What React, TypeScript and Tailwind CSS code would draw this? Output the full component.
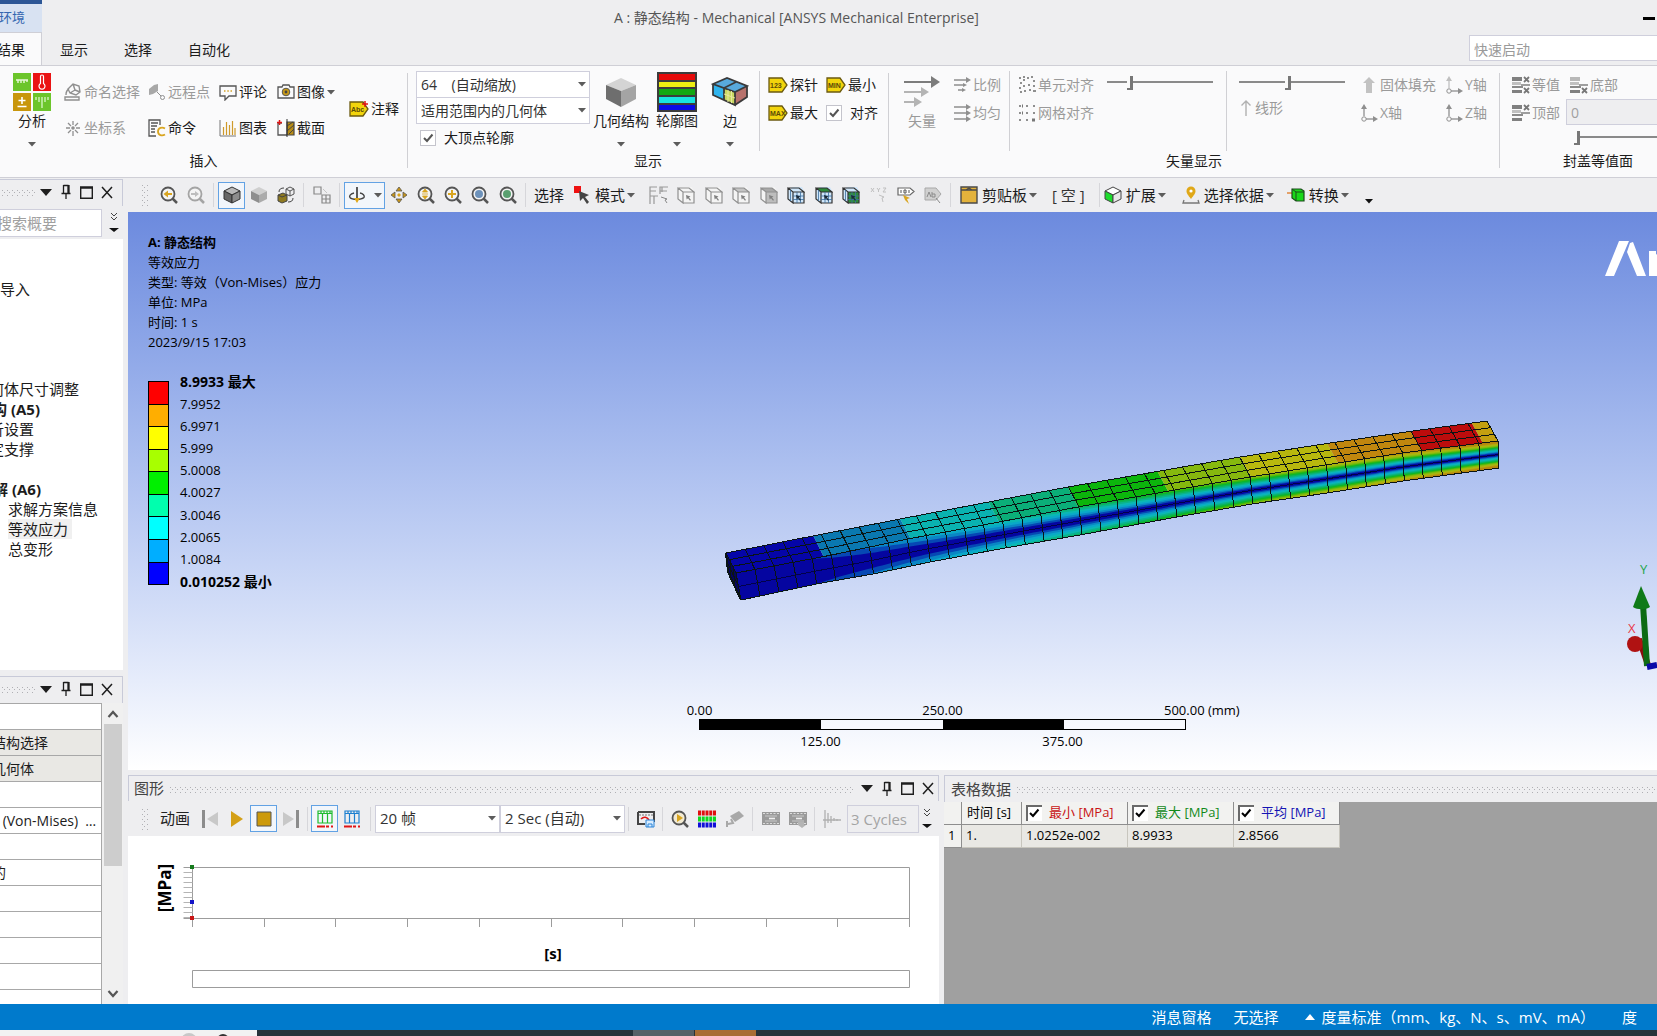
import type { ReactNode } from "react";
import clsx from "clsx";

/* ---------- shared pieces ---------- */

function Svg({ w = 18, h = 18, children }: { w?: number; h?: number; children: ReactNode }) {
  return (
    <svg width={w} height={h} viewBox={`0 0 ${w} ${h}`} fill="none" className="shrink-0" aria-hidden="true">
      {children}
    </svg>
  );
}

function Caret({ color = "#5c5c5c" }: { color?: string }) {
  return (
    <Svg w={8} h={5}>
      <path d="M0 0h8L4 4.5z" fill={color} />
    </Svg>
  );
}

const DOTS =
  "h-2 flex-1 bg-[radial-gradient(circle,#b0b0b4_0.8px,transparent_1px),radial-gradient(circle,#b0b0b4_0.8px,transparent_1px)] bg-[size:5px_5px] bg-[position:0_0,2px_2px]";

function Grip() {
  return (
    <span className="h-6 w-2 shrink-0 bg-[radial-gradient(circle,#b0b0b4_0.8px,transparent_1px),radial-gradient(circle,#b0b0b4_0.8px,transparent_1px)] bg-[size:5px_5px] bg-[position:0_0,2px_2px]" />
  );
}

function WindowButtons() {
  return (
    <div className="flex shrink-0 items-center">
      <button type="button" aria-label="菜单" className="flex w-5 justify-center">
        <Svg w={12} h={7}>
          <path d="M0 0h12L6 7z" fill="#1e1e1e" />
        </Svg>
      </button>
      <button type="button" aria-label="固定" className="flex w-5 justify-center">
        <Svg w={10} h={16}>
          <path d="M2.5 1v8M2.5 1.5h5M7 1v8M8 1v8M.5 9.5h9M5 10v5" stroke="#1e1e1e" strokeWidth="1.3" />
        </Svg>
      </button>
      <button type="button" aria-label="最大化" className="flex w-[21px] justify-center">
        <Svg w={13} h={13}>
          <path d="M.7 1h11.6v11.3H.7zM.7 2h11.6" stroke="#1e1e1e" strokeWidth="1.4" />
        </Svg>
      </button>
      <button type="button" aria-label="关闭" className="flex w-5 justify-center">
        <Svg w={12} h={13}>
          <path d="M1 1l10 11M11 1L1 12" stroke="#1e1e1e" strokeWidth="1.5" />
        </Svg>
      </button>
    </div>
  );
}

function RibbonButton({ icon, label, disabled, menu }: { icon: ReactNode; label: string; disabled?: boolean; menu?: boolean }) {
  return (
    <button
      type="button"
      disabled={disabled}
      className={clsx("flex items-center gap-[2px] text-sm", disabled ? "text-[#9a9a9a]" : "text-[#1c1c1c]")}
    >
      {icon}
      {label}
      {menu && <Caret />}
    </button>
  );
}

function BigButton({ icon, label, width, disabled }: { icon: ReactNode; label: string; width: string; disabled?: boolean }) {
  return (
    <button
      type="button"
      disabled={disabled}
      className={clsx("flex shrink-0 flex-col items-center text-sm", width, disabled ? "text-[#9a9a9a]" : "text-[#1c1c1c]")}
    >
      <span className="flex h-[41px] items-center">{icon}</span>
      <span className="mb-3 leading-[18px]">{label}</span>
      {!disabled && <Caret />}
    </button>
  );
}

function Check({ label, sharp, className }: { label: string; sharp?: boolean; className?: string }) {
  return (
    <label className={clsx("flex items-center", className)}>
      <span className="relative flex">
        <input
          type="checkbox"
          defaultChecked
          className={clsx(
            "size-4 appearance-none bg-white",
            sharp ? "border-t-2 border-l-2 border-[#6a6a6a]" : "border border-[#c4c4cc]",
          )}
        />
        <svg viewBox="0 0 16 16" fill="none" className="pointer-events-none absolute inset-0 size-4" aria-hidden="true">
          <path d="M4 8l3 3 5.500-6.500" stroke={sharp ? "#000" : "#555"} strokeWidth="2" />
        </svg>
      </span>
      {label}
    </label>
  );
}

function Select({ label, value, className, size = "text-sm" }: { label: string; value: string; className: string; size?: string }) {
  return (
    <span className={clsx("relative flex shrink-0", className)}>
      <select
        aria-label={label}
        className={clsx("w-full appearance-none border border-[#cfcfdc] bg-white pl-1 text-[#333]", size)}
      >
        <option>{value}</option>
      </select>
      <span className="pointer-events-none absolute inset-y-0 right-1 flex items-center">
        <Caret />
      </span>
    </span>
  );
}

function Slider({ label, value, width }: { label: string; value: number; width: string }) {
  return (
    <input
      type="range"
      aria-label={label}
      defaultValue={value}
      className={clsx(
        "h-[14px] shrink-0 appearance-none bg-[linear-gradient(#8a8a8a,#8a8a8a)] bg-[size:100%_2px] bg-[position:0_5px] bg-no-repeat [&::-webkit-slider-thumb]:h-[14px] [&::-webkit-slider-thumb]:w-[6px] [&::-webkit-slider-thumb]:appearance-none [&::-webkit-slider-thumb]:border-r-[3px] [&::-webkit-slider-thumb]:border-b-[2px] [&::-webkit-slider-thumb]:border-[#777] [&::-webkit-slider-thumb]:bg-[#fafafa]",
        width,
      )}
    />
  );
}

const Divider = () => <span className="mt-[5px] h-20 w-px shrink-0 bg-[#d0d0d4]" />;
const TallDivider = () => <span className="mt-[7px] h-[95px] w-px shrink-0 bg-[#d0d0d4]" />;

/* ---------- ribbon icons ---------- */

const G = "#8f8f8f";

const analysisIcon = (
  <Svg w={38} h={38}>
    <path d="M0 0h18v18H0zM20 20h18v18H20z" fill="#6cc52b" />
    <path d="M20 0h18v18H20z" fill="#ea1414" />
    <path d="M0 20h18v18H0z" fill="#c8960c" />
    <path d="M3 7h12M5 7v3M8 7v3M11 7v3M14 7v2" stroke="#e8f8da" strokeWidth="1.4" />
    <path d="M27.500 3.500a1.500 1.500 0 013 0v7a3 3 0 11-3 0z" stroke="#fff" strokeWidth="1.200" />
    <path d="M9 24v7M5.500 27.500h7M4.500 33.500h9" stroke="#fff" strokeWidth="1.600" />
    <path d="M29 24v11M26 24v5M32 24v5M23 24v3M35 24v3" stroke="#d9f7c8" strokeWidth="1.300" />
  </Svg>
);

const namedSelIcon = (
  <Svg>
    <path d="M4 6l5-5 6 2 1 6-4 3-6-2zM9 1l2 6-5 3M11 7l5 2M1 14h14v3H1zM2 12c0-4 1-5 3-6" stroke={G} strokeWidth="1.4" />
  </Svg>
);
const remoteIcon = (
  <Svg>
    <path d="M1 6l5-4 4-1v7l-5 3-4 1z" fill="#a8a8a8" />
    <path d="M9 9l4 4" stroke={G} />
    <circle cx="14.500" cy="14.500" r="2" stroke={G} />
  </Svg>
);
const commentIcon = (
  <Svg>
    <path d="M1 3h16v10h-7l-4 4v-4H1z" stroke="#555" strokeWidth="1.300" />
    <path d="M5 8h1.500M8.300 8h1.500M11.500 8H13" stroke="#d4a32a" strokeWidth="1.500" />
  </Svg>
);
const imageIcon = (
  <Svg>
    <path d="M1 4h4l1-2h6l1 2h4v11H1z" stroke="#555" strokeWidth="1.300" />
    <circle cx="9" cy="9" r="3.800" fill="#c99a16" stroke="#555" />
    <circle cx="9" cy="9" r="1.400" fill="#444" />
  </Svg>
);
const coordIcon = (
  <Svg>
    <path d="M9 2v4M9 12v5M2 9h4M12 9h4M4 4l3 3M14 4l-3 3M4 14l3-3M14 14l-3-3" stroke={G} strokeWidth="1.300" />
    <circle cx="9" cy="9" r="1.800" fill={G} />
  </Svg>
);
const commandIcon = (
  <Svg>
    <path d="M12 6V1H1v16h7M3 4h7M3 7h6M3 10h4M3 13h4" stroke="#555" strokeWidth="1.300" />
    <path d="M17 9.500c-3-2-7-.5-7 3s4 5 7 3" stroke="#d9a520" strokeWidth="1.800" />
  </Svg>
);
const chartIcon = (
  <Svg>
    <path d="M1 1v16h16" stroke="#777" />
    <path d="M4.500 8v8M7.500 3v13M10.500 6v10M13.500 2v14M16 9v7" stroke="#cf9a2a" strokeWidth="1.200" />
  </Svg>
);
const sectionIcon = (
  <Svg>
    <path d="M5 4H1v12h9" stroke="#555" strokeWidth="1.300" />
    <path d="M10 3h7v13h-7z" fill="#b98c14" stroke="#444" strokeWidth="1.200" />
    <path d="M10 7l6-4M10 12l7-6M12 15l5-5" stroke="#444" />
    <path d="M10 0v18" stroke="#333" />
    <path d="M0 3.500h5M2.500 1v5" stroke="#e01515" strokeWidth="1.500" />
  </Svg>
);

function TagIcon({ text, plus }: { text: string; plus?: boolean }) {
  return (
    <Svg w={20} h={16}>
      <path d="M1 1h13l5 7-5 7H1z" fill="#f2d40c" stroke="#6b5a10" strokeWidth="1.300" />
      <text x="2" y="11" fontSize="7" fontWeight="700" fill="#5a4a08" fontFamily="Liberation Sans, sans-serif">
        {text}
      </text>
      {plus && <path d="M16 0v6M13 3h6" stroke="#e01515" strokeWidth="1.500" />}
    </Svg>
  );
}

const bigCube = (
  <Svg w={32} h={32}>
    <path d="M16 2l15 7-15 6L1 9z" fill="#d4d4d4" />
    <path d="M1 9l15 6v16L1 23z" fill="#6e6e6e" />
    <path d="M31 9l-15 6v16l15-8z" fill="#a4a4a4" />
  </Svg>
);
const contourIcon = (
  <Svg w={40} h={40}>
    <path d="M0 0h40v40H0z" fill="#3c3c3c" />
    <path d="M2 2h36v6H2z" fill="#e60a0a" />
    <path d="M2 10h36v5H2z" fill="#eeee12" />
    <path d="M2 17h36v6H2z" fill="#12a812" />
    <path d="M2 25h36v6H2z" fill="#18e4e0" />
    <path d="M2 33h36v5H2z" fill="#0a0ae6" />
  </Svg>
);
const edgesIcon = (
  <Svg w={38} h={32}>
    <path d="M2 8l14-6 20 8-12 6z" fill="#58a9dc" />
    <path d="M2 8l11 4v12L2 19z" fill="#2fb4ee" />
    <path d="M13 12l11 4v13l-11-5z" fill="#c8d860" />
    <path d="M24 16l12-6v11l-12 8z" fill="#b8726c" />
    <path d="M2 8l14-6 20 8-12 6zM2 8v11l22 10V16M24 29l12-8V10M13 12v12M13 12l12-6" stroke="#3a3a3a" strokeWidth="1.800" />
    <path d="M17 14v12M20.500 15v12M13 18l11 4" stroke="#e8e8a0" />
  </Svg>
);
const vectorIcon = (
  <Svg w={36} h={34}>
    <path d="M0 7h28" stroke="#7c7c7c" strokeWidth="2" />
    <path d="M27 1l9 6-9 6z" fill="#7c7c7c" />
    <path d="M0 17h18M0 27h12" stroke="#b4b4b4" strokeWidth="2" />
    <path d="M17 12l8 5-8 5zM10 22l8 5-8 5z" fill="#b4b4b4" />
  </Svg>
);
const scaleIcon = (
  <Svg>
    <path d="M1 4h13M1 9h9M5 14h5" stroke={G} strokeWidth="1.400" />
    <path d="M13 1l5 3-5 3zM10 7l4 2-4 2zM9 12l4 2-4 2z" fill={G} />
  </Svg>
);
const uniformIcon = (
  <Svg>
    <path d="M1 3h14M1 9h14M1 15h14" stroke={G} strokeWidth="1.400" />
    <path d="M13 0l5 3-5 3zM13 6l5 3-5 3zM13 12l5 3-5 3z" fill={G} />
  </Svg>
);
const elementAlign = (
  <Svg>
    <path
      d="M1 2h2M5 4h2M2 7h2M9 2h2M13 1h2M15 5h2M1 12h2M5 10h2M6 15h2M10 9h2M15 10h2M11 14h2M15 15h3M2 16h2M5 1h2"
      stroke={G}
      strokeWidth="2"
    />
  </Svg>
);
const gridAlign = (
  <Svg>
    <path d="M1 2h2M8 2h2M15 2h2M1 9h2M8 9h2M15 9h2M1 16h2M8 16h2" stroke={G} strokeWidth="2" />
    <path d="M14 16h3M4 2h1M4 9h1" stroke="#777" strokeWidth="3" />
  </Svg>
);
const lineUp = (
  <Svg w={14}>
    <path d="M7 17V2M2.500 6.500L7 2l4.500 4.500" stroke="#b0b0b0" strokeWidth="1.400" />
  </Svg>
);
const solidUp = (
  <Svg>
    <path d="M9 1l6 6h-3v10H6V7H3z" fill="#c2c2c2" />
  </Svg>
);

function AxisIcon({ dim }: { dim?: boolean }) {
  return (
    <Svg>
      <path d="M4 12V3" stroke={dim ? "#c0c0c0" : G} strokeWidth="1.300" />
      <path d="M4 0l3 5H1z" fill={dim ? "#c0c0c0" : G} />
      <path d="M6 15h8" stroke={G} strokeWidth="1.300" />
      <path d="M13 12l5 3-5 3z" fill={G} />
      <circle cx="4" cy="15" r="2.200" stroke={G} />
    </Svg>
  );
}

function IsoIcon({ low, high }: { low?: boolean; high?: boolean }) {
  return (
    <Svg>
      <path d="M0 1h10v4H0z" fill={low ? "#b8b8b8" : "#808080"} />
      <path d="M0 6h9v3H0z" fill="#c0c0c0" />
      <path d="M0 10h11v2H0z" fill="#8a8a8a" />
      <path d="M0 14h10v3H0z" fill="#808080" />
      {!low && <path d="M12 1l5 5M17 1l-5 5" stroke="#777" strokeWidth="1.800" />}
      {!high && <path d="M12 12l5 5M17 12l-5 5" stroke="#777" strokeWidth="1.800" />}
      <path d="M9 9h9" stroke="#888" strokeWidth="1.600" />
    </Svg>
  );
}

/* ---------- toolbar icons ---------- */

function Magnifier({ fill = "#f4f4f4", dim, children }: { fill?: string; dim?: boolean; children?: ReactNode }) {
  const c = dim ? "#a4a4a4" : "#555";
  return (
    <Svg>
      <circle cx="8" cy="8" r="6.500" fill={fill} stroke={c} strokeWidth="1.800" />
      <path d="M12.500 12.500l4.500 4.500" stroke={c} strokeWidth="2.500" />
      {children}
    </Svg>
  );
}

function SmallCube({ top, left, right, stroke = "none" }: { top: string; left: string; right: string; stroke?: string }) {
  return (
    <Svg>
      <path d="M9 1l8 4-8 4-8-4z" fill={top} stroke={stroke} />
      <path d="M1 5l8 4v8l-8-4z" fill={left} stroke={stroke} />
      <path d="M17 5l-8 4v8l8-4z" fill={right} stroke={stroke} />
    </Svg>
  );
}

function FilterCube({ fill = "none", top = "none", stroke = "#909090", mesh }: { fill?: string; top?: string; stroke?: string; mesh?: boolean }) {
  return (
    <Svg>
      <path d="M1 3l5-2h9l2 4v12H6l-5-3z" fill={mesh ? "#cfe6fa" : "#f4f4f4"} />
      <path d="M6 6h11v11H6z" fill={fill} />
      <path d="M1 2h11l5 4H6z" fill={top} />
      <path d="M1 2h11l5 4H6zM1 2v11l5 4V6M6 17h11V6" stroke={stroke} strokeWidth="1.200" />
      {mesh && <path d="M10 6v11M13.500 6v11M6 10h11M6 13.500h11M3.500 4v11" stroke="#3c6e9e" strokeWidth="0.800" />}
      <path d="M9 9l4.500 1.500-1.500 1 2 2.500-1 .8-2-2.600-1.300 1.300z" fill={mesh ? "#1a2a3a" : "#808080"} />
    </Svg>
  );
}

function Film({ color, sub = "#e01515" }: { color: string; sub?: string }) {
  return (
    <Svg>
      <path d="M2 1h14v12H2zM2 3.500h14M6.500 3v10M11.500 3v10M5 1v2M8 1v2M11 1v2M14 1v2" stroke={color} strokeWidth="1.200" />
      <path d="M1 16.500h8M10 16.500h3M15 16.500h2" stroke={sub} strokeWidth="1.800" />
    </Svg>
  );
}

function GrayFilm({ down }: { down?: boolean }) {
  return (
    <Svg>
      <path d="M0 2h18v13H0z" fill="#9a9a9a" />
      <path d="M1 3.500h16M1 13.500h16" stroke="#ddd" strokeWidth="1.200" strokeDasharray="2 1.500" />
      <path d="M3 6h12M3 11h12" stroke="#c8c8c8" />
      <path d="M7 8.500h6" stroke="#eee" strokeWidth="1.600" />
      {down && <path d="M9 12h6v3h2l-4 3-4-3z" fill="#b4b4b4" />}
    </Svg>
  );
}

function ToolButton({ children, label, active, width = "w-[27px]" }: { children: ReactNode; label: string; active?: boolean; width?: string }) {
  return (
    <button
      type="button"
      aria-label={label}
      className={clsx("flex h-[27px] shrink-0 items-center justify-center gap-2", width, active && "border border-[#62a2e4] bg-[#f2f6fb]")}
    >
      {children}
    </button>
  );
}

const Sep = ({ tight }: { tight?: boolean }) => (
  <span className={clsx("h-6 w-px shrink-0 bg-[#d6d6da]", tight ? "mx-[3px]" : "mx-1")} />
);

function MenuButton({ icon, label, className }: { icon: ReactNode; label: string; className?: string }) {
  return (
    <button type="button" className={clsx("flex items-center gap-[2px]", className)}>
      {icon}
      <span className="pl-[2px]">{label}</span>
      <Caret />
    </button>
  );
}

/* ---------- ribbon ---------- */

function Group({ label, className, children }: { label: string; className: string; children: ReactNode }) {
  return (
    <section className={clsx("flex shrink-0 flex-col", className)}>
      <div className="flex h-[86px] items-start">{children}</div>
      <h2 className="text-center text-sm leading-[18px] text-[#1c1c1c]">{label}</h2>
    </section>
  );
}

function Ribbon() {
  return (
    <div className="flex h-[113px] shrink-0 overflow-hidden border-y border-[#cfcfd6] bg-[#fafafb]">
      <Group label="插入" className="w-[407px]">
        <div className="ml-1 pt-[5px]">
          <BigButton icon={analysisIcon} label="分析" width="w-14" />
        </div>
        <div className="ml-1 grid grid-cols-[84px_71px_58px_72px] grid-rows-[36px_36px] pt-2">
          <RibbonButton icon={namedSelIcon} label="命名选择" disabled />
          <RibbonButton icon={remoteIcon} label="远程点" disabled />
          <RibbonButton icon={commentIcon} label="评论" />
          <RibbonButton icon={imageIcon} label="图像" menu />
          <RibbonButton icon={coordIcon} label="坐标系" disabled />
          <RibbonButton icon={commandIcon} label="命令" />
          <RibbonButton icon={chartIcon} label="图表" />
          <RibbonButton icon={sectionIcon} label="截面" />
        </div>
        <div className="flex h-full items-center">
          <RibbonButton icon={<TagIcon text="Abc" plus />} label="注释" />
        </div>
      </Group>
      <TallDivider />
      <Group label="显示" className="w-[480px]">
        <div className="ml-2 flex w-[174px] flex-col pt-[5px]">
          <Select label="轮廓缩放" value={"64\u00a0\u00a0\u00a0\u00a0(自动缩放)"} className="h-[27px]" />
          <Select label="适用范围" value="适用范围内的几何体" className="-mt-px h-[27px]" />
          <Check label="大顶点轮廓" className="h-7 gap-2 pl-1 text-sm text-[#1c1c1c]" />
        </div>
        <div className="ml-[3px] flex pt-[5px]">
          <BigButton icon={bigCube} label="几何结构" width="w-14" />
          <BigButton icon={contourIcon} label="轮廓图" width="w-14" />
          <BigButton icon={edgesIcon} label="边" width="w-[50px]" />
        </div>
        <span className="w-1" />
        <Divider />
        <div className="ml-2 grid grid-cols-[58px_54px] grid-rows-[28px_28px] pt-[5px]">
          <RibbonButton icon={<TagIcon text="123" />} label="探针" />
          <RibbonButton icon={<TagIcon text="MIN" />} label="最小" />
          <RibbonButton icon={<TagIcon text="MAX" />} label="最大" />
          <Check label="对齐" className="gap-2 text-sm text-[#1c1c1c]" />
        </div>
      </Group>
      <TallDivider />
      <Group label="矢量显示" className="w-[610px]">
        <div className="ml-1 pt-[5px]">
          <BigButton icon={vectorIcon} label="矢量" width="w-[58px]" disabled />
        </div>
        <div className="grid w-[58px] grid-rows-[28px_28px] pt-[5px] pl-[2px]">
          <RibbonButton icon={scaleIcon} label="比例" disabled />
          <RibbonButton icon={uniformIcon} label="均匀" disabled />
        </div>
        <Divider />
        <div className="ml-2 grid w-[89px] grid-rows-[28px_28px] pt-[5px]">
          <RibbonButton icon={elementAlign} label="单元对齐" disabled />
          <RibbonButton icon={gridAlign} label="网格对齐" disabled />
        </div>
        <div className="flex w-[119px] pt-[10px]">
          <Slider label="矢量长度" value={20} width="w-[106px]" />
        </div>
        <Divider />
        <div className="ml-3 flex w-[121px] flex-col items-start gap-2 pt-[10px]">
          <Slider label="矢量密度" value={46} width="w-[106px]" />
          <RibbonButton icon={lineUp} label="线形" disabled />
        </div>
        <div className="grid grid-cols-[85px_54px] grid-rows-[28px_28px] pt-[5px]">
          <RibbonButton icon={solidUp} label="固体填充" disabled />
          <RibbonButton icon={<AxisIcon dim />} label="Y轴" disabled />
          <RibbonButton icon={<AxisIcon />} label="X轴" disabled />
          <RibbonButton icon={<AxisIcon />} label="Z轴" disabled />
        </div>
      </Group>
      <TallDivider />
      <Group label="封盖等值面" className="w-[196px]">
        <div className="ml-3 flex flex-col pt-[5px]">
          <div className="grid grid-cols-[54px_130px] grid-rows-[28px_28px]">
            <RibbonButton icon={<IsoIcon />} label="等值" disabled />
            <span className="flex pl-1">
              <RibbonButton icon={<IsoIcon low />} label="底部" disabled />
            </span>
            <RibbonButton icon={<IsoIcon high />} label="顶部" disabled />
            <input
              aria-label="封盖值"
              defaultValue="0"
              disabled
              className="h-[26px] w-full border border-[#cfcfdc] bg-[#eeeef0] px-1 text-sm text-[#a0a0a0]"
            />
          </div>
          <div className="flex justify-end pt-1">
            <Slider label="封盖位置" value={0} width="w-[122px]" />
          </div>
        </div>
      </Group>
    </div>
  );
}

/* ---------- left column ---------- */

const TREE = [
  { text: "" },
  { text: "" },
  { text: "几何体导入", pad: "pl-[55px]" },
  { text: "" },
  { text: "" },
  { text: "" },
  { text: "" },
  { text: "几何体尺寸调整", pad: "pl-[74px]" },
  { text: "静态结构 (A5)", pad: "pl-[47px]", bold: true },
  { text: "分析设置", pad: "pl-[74px]" },
  { text: "固定支撑", pad: "pl-[74px]" },
  { text: "" },
  { text: "求解 (A6)", pad: "pl-[78px]", bold: true },
  { text: "求解方案信息", pad: "pl-[108px]" },
  { text: "等效应力", pad: "pl-[108px]", selected: true },
  { text: "总变形", pad: "pl-[108px]" },
];

const PROPS = [
  { text: "" },
  { text: "几何结构选择", pad: "pl-[64px]", shaded: true },
  { text: "所有几何体", pad: "pl-[64px]", shaded: true },
  { text: "" },
  { text: "等效 (Von-Mises)\u00a0 …", pad: "pl-[71px]" },
  { text: "" },
  { text: "使用的", pad: "pl-[64px]" },
  { text: "" },
  { text: "" },
  { text: "" },
  { text: "" },
  { text: "" },
];

function LeftPanels() {
  return (
    <aside className="flex w-[128px] shrink-0 flex-col bg-[#eeeef0] pt-px pr-[5px]">
      <div className="flex h-[27px] shrink-0 items-center border-t border-r border-[#c8cad8] pb-[2px]">
        <span className={DOTS} />
        <WindowButtons />
        <span className="w-[5px]" />
      </div>
      <div className="flex h-[33px] shrink-0 items-center gap-[7px]">
        <input
          aria-label="搜索概要"
          placeholder="搜索概要"
          className="-ml-2 h-7 w-[110px] border border-[#cfcfdc] bg-white pl-1 text-[15px] placeholder:text-[#a0a0a0]"
        />
        <Svg w={10} h={22}>
          <path d="M2 1l3 3 3-3M2 5l3 3 3-3" stroke="#444" />
          <path d="M0 16h10l-5 4z" fill="#111" />
        </Svg>
      </div>
      <div className="flex flex-1 justify-end overflow-hidden bg-white">
        <ul className="w-[223px] shrink-0 text-[15px] leading-5 text-[#1c1c1c]">
          {TREE.map((row, i) => (
            <li key={i} className={clsx("h-5", row.pad, row.bold && "font-bold")}>
              <span className={clsx(row.selected && "bg-[#f0f0f0] pr-1")}>{row.text}</span>
            </li>
          ))}
        </ul>
      </div>

      <div className="mt-[6px] flex h-[27px] shrink-0 items-center border-t border-r border-[#c8cad8] pb-[2px]">
        <span className={DOTS} />
        <WindowButtons />
        <span className="w-[5px]" />
      </div>
      <div className="flex h-[301px] shrink-0">
        <div className="flex w-[102px] shrink-0 justify-end overflow-hidden border-r border-[#a8a8a8] bg-white">
          <ul className="w-[201px] shrink-0 text-sm text-[#1c1c1c]">
            {PROPS.map((row, i) => (
              <li
                key={i}
                className={clsx("h-[26px] border-t border-[#a8a8a8] leading-[25px]", row.pad, row.shaded && "bg-[#e9e8e4]")}
              >
                {row.text}
              </li>
            ))}
          </ul>
        </div>
        <div className="flex flex-1 flex-col items-center justify-between bg-[#f0f0f0] py-1">
          <Svg w={12} h={14}>
            <path d="M1.500 10L6 5l4.500 5" stroke="#555" strokeWidth="2.200" />
          </Svg>
          <span className="mt-[3px] mb-auto h-[142px] w-[18px] bg-[#cdcdcd]" />
          <Svg w={12} h={14}>
            <path d="M1.500 5L6 10l4.500-5" stroke="#555" strokeWidth="2.200" />
          </Svg>
        </div>
      </div>
    </aside>
  );
}

/* ---------- graphics toolbar ---------- */

function ViewToolbar() {
  return (
    <div className="flex h-[34px] shrink-0 items-center overflow-hidden bg-[#eeeef0] pl-3 text-[15px] text-[#1c1c1c]">
      <Grip />
      <div className="ml-[7px] flex items-center">
        <ToolButton label="上一视图">
          <Magnifier>
            <path d="M12 7H8V4.500L3.500 8 8 11.500V9h4z" fill="#d9a520" />
          </Magnifier>
        </ToolButton>
        <ToolButton label="下一视图">
          <Magnifier dim>
            <path d="M4 7h4V5l4 3-4 3V9H4z" fill="#bdbdbd" />
          </Magnifier>
        </ToolButton>
      </div>
      <Sep />
      <ToolButton label="着色和边" active>
        <SmallCube top="#b8b8b8" left="#666" right="#8c8c8c" stroke="#333" />
      </ToolButton>
      <ToolButton label="着色">
        <SmallCube top="#cfcfcf" left="#8e8e8e" right="#ababab" />
      </ToolButton>
      <ToolButton label="切换模型">
        <Svg>
          <path d="M9 3l4-2 4 2v5l-4 2-4-2zM9 3l4 2 4-2M13 5v5" stroke="#555" />
          <path d="M1 9l5-2 4 2v6l-5 2-4-2z" fill="#8f7a20" stroke="#444" />
          <path d="M1 9l4 2 5-2M2 6c0-3 2-4 5-4M11 16c3 0 5-1 5-4" stroke="#444" />
        </Svg>
      </ToolButton>
      <Sep />
      <ToolButton label="爆炸视图">
        <Svg>
          <path d="M1 1h7v7H1zM9 9h8v8H9zM13 9v8M9 13h8" stroke="#888" strokeWidth="1.200" />
          <path d="M10 3l4 4" stroke="#c4c4c4" />
        </Svg>
      </ToolButton>
      <Sep />
      <ToolButton label="旋转" active width="w-[41px]">
        <Svg>
          <path d="M6 7C2 8 1 10 2 11.500c2 2.500 11 2.500 14 0 1-2-1-4-4-4.500" stroke="#444" strokeWidth="1.400" />
          <path d="M9 1v11" stroke="#333" strokeWidth="1.600" />
          <path d="M6 12l3 5 3-5z" fill="#e0a818" />
        </Svg>
        <Caret />
      </ToolButton>
      <ToolButton label="平移">
        <Svg>
          <path d="M9 1l3 4H6zM9 17l3-4H6zM1 9l4-3v6zM17 9l-4-3v6z" fill="#c99516" stroke="#555" strokeWidth="0.800" />
          <path d="M7.500 9h3M9 7.500v3" stroke="#d9a520" strokeWidth="2" />
        </Svg>
      </ToolButton>
      <ToolButton label="缩放">
        <Magnifier>
          <path d="M8 3l2.500 3h-5zM8 13l2.500-3h-5zM5 8h6" fill="#d9a520" stroke="#d9a520" strokeWidth="0.800" />
        </Magnifier>
      </ToolButton>
      <ToolButton label="放大">
        <Magnifier>
          <path d="M8 4v8M4 8h8" stroke="#d9a520" strokeWidth="2" />
        </Magnifier>
      </ToolButton>
      <ToolButton label="框选缩放" width="w-7">
        <Magnifier>
          <circle cx="8" cy="8" r="4" fill="#6d92bb" />
        </Magnifier>
      </ToolButton>
      <ToolButton label="适合窗口">
        <Magnifier>
          <circle cx="8" cy="8" r="4" fill="#5ba070" />
        </Magnifier>
      </ToolButton>
      <Sep />
      <span className="px-1">选择</span>
      <MenuButton
        className="pl-[5px]"
        label="模式"
        icon={
          <Svg w={18} h={20}>
            <path d="M1 1h7v7H1z" fill="#ee1111" />
            <path d="M6 6l10 4-4 2 4 5-2 2-4-6-3 3z" fill="#444" />
          </Svg>
        }
      />
      <span className="w-[10px]" />
      <ToolButton label="选择过滤">
        <Svg w={20} h={20}>
          <path d="M1 19V2h7M1 6h6M5 19v-8h4M1 11h6M11 9V2h8M11 6h7M13 2v5" stroke="#999" strokeWidth="1.200" />
          <path d="M12 12l6 2-2 1 2 3" stroke="#888" />
        </Svg>
      </ToolButton>
      <ToolButton label="顶点" width="w-7">
        <FilterCube />
      </ToolButton>
      <ToolButton label="边">
        <FilterCube />
      </ToolButton>
      <ToolButton label="面" width="w-7">
        <FilterCube top="#c4c4c4" />
      </ToolButton>
      <ToolButton label="体">
        <FilterCube fill="#bdbdbd" top="#a8a8a8" />
      </ToolButton>
      <ToolButton label="节点" width="w-7">
        <FilterCube mesh stroke="#333" />
      </ToolButton>
      <ToolButton label="单元面">
        <FilterCube mesh stroke="#333" top="#2e8b3c" />
      </ToolButton>
      <ToolButton label="单元" width="w-7">
        <FilterCube mesh stroke="#333" fill="#2e8b3c" />
      </ToolButton>
      <ToolButton label="坐标">
        <Svg>
          <path d="M1 2l3 4M4 2L1 6M7 2l1.500 2L10 2M8.500 4v2M13 2h3l-3 4h3M9 9l5 2-2 1 1 4" stroke="#c0c0c0" />
        </Svg>
      </ToolButton>
      <ToolButton label="结果标签">
        <Svg>
          <path d="M1 2h12l4 3.500L13 9H1z" fill="#fff" stroke="#666" strokeWidth="1.200" />
          <path d="M4 4v3M7 4h2v3H7zM12 4v3" stroke="#555" />
          <path d="M6 9l7 3-3 1 2 5-4-4z" fill="#d9a520" />
        </Svg>
      </ToolButton>
      <ToolButton label="注释标签">
        <Svg>
          <path d="M1 2h11l5 6-5 6H1z" fill="#d0d0d0" stroke="#a8a8a8" />
          <path d="M3 11l2-5 2 5M8 6v5h3V8H8M12 12l4 5" stroke="#8a8a8a" />
        </Svg>
      </ToolButton>
      <Sep />
      <MenuButton
        className="pl-[5px]"
        label="剪贴板"
        icon={
          <Svg>
            <path d="M1 1h16v16H1z" fill="#e3b23c" stroke="#4a4a4a" strokeWidth="1.400" />
            <path d="M1 4h16M6 4l3-2 3 2" stroke="#4a4a4a" strokeWidth="1.300" />
          </Svg>
        }
      />
      <span className="pr-[10px] pl-[15px] text-[#333]">[ 空 ]</span>
      <Sep />
      <MenuButton
        className="pr-2"
        label="扩展"
        icon={<SmallCube top="#fff" left="#1ddc2c" right="#e8e8e8" stroke="#444" />}
      />
      <MenuButton
        className="px-2"
        label="选择依据"
        icon={
          <Svg>
            <path d="M9 13C6 9 4.500 7.500 4.500 5a4.500 4.500 0 019 0c0 2.500-1.500 4-4.500 8z" fill="#e0a818" />
            <circle cx="9" cy="5" r="1.600" fill="#fff" />
            <path d="M2 14l-1 3h16l-1-3" stroke="#777" strokeWidth="1.300" />
          </Svg>
        }
      />
      <MenuButton
        className="pl-[5px]"
        label="转换"
        icon={
          <Svg>
            <path d="M0 7h5" stroke="#e08030" strokeWidth="1.400" />
            <path d="M5 3h9l3 2v10H9l-4-3z" fill="#19d819" stroke="#1c4a1c" strokeWidth="1.200" />
            <path d="M5 3l4 3h8M9 6v9" stroke="#1c4a1c" />
          </Svg>
        }
      />
      <button type="button" aria-label="更多" className="ml-4 self-end pb-2">
        <Caret color="#111" />
      </button>
    </div>
  );
}

/* ---------- 3D result view ---------- */

type Pt = [number, number];

const BACK: Pt[] = [[598, 341], [685, 324], [772, 307], [845, 293], [940, 275], [1032, 259], [1112, 245], [1202, 231], [1285, 219], [1359, 209]];
const FRONT: Pt[] = [[608, 361], [704, 343], [780, 327], [855, 313], [950, 295], [1047, 278], [1122, 265], [1197, 253], [1274, 241], [1370, 229]];
const BASE: Pt[] = [[613, 388], [688, 372], [745, 362], [802, 350], [877, 336], [952, 323], [1049, 305], [1124, 292], [1199, 281], [1275, 269], [1371, 256]];
const COLS = 40;

function along(edge: Pt[], t: number): Pt {
  const x = edge[0][0] + (edge[edge.length - 1][0] - edge[0][0]) * t;
  let i = 0;
  while (i < edge.length - 2 && edge[i + 1][0] < x) i++;
  const [x0, y0] = edge[i];
  const [x1, y1] = edge[i + 1];
  return [x, y0 + ((y1 - y0) * (x - x0)) / (x1 - x0)];
}

const mix = (a: Pt, b: Pt, k: number): Pt => [a[0] + (b[0] - a[0]) * k, a[1] + (b[1] - a[1]) * k];
const str = (pts: Pt[]) => pts.map((p) => `${p[0].toFixed(1)},${p[1].toFixed(1)}`).join(" ");
const steps = Array.from({ length: COLS + 1 }, (_, i) => i / COLS);

const TOP_BANDS: [number, number, string][] = [
  [0, 0.115, "#0505a8"],
  [0.115, 0.229, "#0a78b0"],
  [0.229, 0.345, "#0ab2b0"],
  [0.345, 0.449, "#0bae78"],
  [0.449, 0.567, "#0cb50c"],
  [0.567, 0.676, "#86b80e"],
  [0.676, 0.79, "#b8b80e"],
  [0.79, 0.9, "#c0860e"],
  [0.9, 0.98, "#bc0c0c"],
  [0.98, 1, "#c4a010"],
];

const FACE_COLORS = ["#0505a0", "#0648b4", "#0a86c4", "#0aa8c8", "#0bb8b4", "#0bb48a", "#0bb45a", "#0cb52c", "#3cb80e", "#78ba0e", "#9cba0e", "#b0b40e", "#b49a0e"];

// stress level on the face grows with the distance from the free end
const level = (t: number) => Math.max(0.01, (t - 0.01) * 8.2);

function faceBand(limit: number) {
  const upper: Pt[] = [];
  const lower: Pt[] = [];
  for (let i = 0; i <= 160; i++) {
    const t = i / 160;
    const half = Math.min(1, limit / level(t)) / 2;
    const a = along(FRONT, t);
    const b = along(BASE, t);
    upper.push(mix(a, b, 0.5 - half));
    lower.unshift(mix(a, b, 0.5 + half));
  }
  return str([...upper, ...lower]);
}

function Beam() {
  const rows = [0, 1 / 3, 2 / 3, 1];
  return (
    <g>
      {TOP_BANDS.map(([from, to, fill]) => {
        const ts = [from, (from + to) / 2, to];
        return (
          <polygon
            key={from}
            points={str([...ts.map((t) => along(BACK, t)), ...ts.map((t) => along(FRONT, t)).reverse()])}
            fill={fill}
          />
        );
      })}
      <polygon points={faceBand(99)} fill="#b8860e" />
      {FACE_COLORS.map((fill, i) => (
        <polygon key={fill} points={faceBand(0.75 + i * 0.5)} fill={fill} />
      )).reverse()}
      <polygon points="598,341 608,361 613,388 600,360" fill="#04045c" />
      <g stroke="#0a1414" strokeWidth="1" fill="none" shapeRendering="crispEdges">
        {rows.map((k) => (
          <polyline key={k} points={str(steps.map((t) => mix(along(BACK, t), along(FRONT, t), k)))} />
        ))}
        {[0.5, 1].map((k) => (
          <polyline
            key={k}
            points={str(steps.map((t) => mix(along(FRONT, t), along(BASE, t), k)))}
            stroke={k === 1 ? "#0a1414" : "#02024a"}
          />
        ))}
        {steps.map((t) => (
          <polyline key={t} points={str([along(BACK, t), along(FRONT, t), along(BASE, t)])} />
        ))}
        <polyline points="598,341 600,360 613,388" strokeWidth="2" />
        <path d="M602 348l1 17M605 355l2 20M600 352l11 23" />
      </g>
    </g>
  );
}

const LEGEND = [
  ["8.9933 最大", "bg-[#ff0000]"],
  ["7.9952", "bg-[#ffae00]"],
  ["6.9971", "bg-[#ffff00]"],
  ["5.999", "bg-[#a8ff00]"],
  ["5.0008", "bg-[#00f000]"],
  ["4.0027", "bg-[#00ffae]"],
  ["3.0046", "bg-[#00ffff]"],
  ["2.0065", "bg-[#00aeff]"],
  ["1.0084", "bg-[#0000ff]"],
];

function GraphicsView() {
  return (
    <div className="relative flex-1 overflow-hidden bg-linear-to-b from-[#6c8ade] to-white">
      <svg viewBox="0 0 1529 558" className="absolute inset-0 size-full" role="img" aria-label="等效应力云图">
        <Beam />
        {/* brand mark */}
        <path d="M1477 64l14-35h10l-15 35zM1502 31l3-1 13 34h-9l-10-24z" fill="#fff" />
        <path d="M1521 64V39h7v4c3-4 6-5 10-5v26" fill="#fff" />
        {/* axis triad */}
        <path d="M1511 427l9 26" stroke="#8c0d0d" strokeWidth="6" />
        <circle cx="1507" cy="432" r="8" fill="#b01212" />
        <path d="M1515 392l4 62" stroke="#0d6b14" strokeWidth="6" />
        <path d="M1513 374l9 21c-4 3-13 3-17 0z" fill="#0f7a18" />
        <path d="M1519 455l10-2" stroke="#0a0aa8" strokeWidth="6" />
        <g fontFamily="Open Sans, sans-serif" fontSize="13">
          <text x="1512" y="362" fill="#1ea54a">
            Y
          </text>
          <text x="1500" y="421" fill="#e83a4a">
            X
          </text>
        </g>
      </svg>

      <div className="absolute top-5 left-5 text-[13px] leading-5 text-black">
        <p className="font-bold">A: 静态结构</p>
        <p>等效应力</p>
        <p>类型: 等效（Von-Mises）应力</p>
        <p>单位: MPa</p>
        <p>时间: 1 s</p>
        <p>2023/9/15 17:03</p>
      </div>

      <div className="absolute top-[159px] left-5 flex gap-[11px] text-[13px] text-black">
        <div className="mt-[10px] flex h-[204px] w-[21px] flex-col divide-y divide-black border border-black">
          {LEGEND.map(([value, color]) => (
            <span key={value} className={clsx("flex-1", color)} />
          ))}
        </div>
        <div className="flex h-[222px] flex-col">
          {LEGEND.map(([value], i) => (
            <span key={value} className={clsx("flex flex-1 items-center", i === 0 && "text-sm font-bold")}>
              {value}
            </span>
          ))}
          <span className="flex flex-1 items-center text-sm font-bold">0.010252 最小</span>
        </div>
      </div>

      <div className="absolute bottom-[18px] left-[511px] w-[620px] text-[13px] leading-[22px] text-black">
        <div className="flex leading-[18px]">
          <span className="w-[121px] text-center">0.00</span>
          <span className="ml-[122px] w-[121px] text-center">250.00</span>
          <span className="ml-[161px]">500.00 (mm)</span>
        </div>
        <div className="ml-[60px] flex h-[11px] w-[487px] border border-black bg-white/40">
          <span className="flex-1 bg-black" />
          <span className="flex-1" />
          <span className="flex-1 bg-black" />
          <span className="flex-1" />
        </div>
        <div className="flex">
          <span className="ml-[121px] w-[121px] text-center">125.00</span>
          <span className="ml-[121px] w-[121px] text-center">375.00</span>
        </div>
      </div>
    </div>
  );
}

/* ---------- graph panel ---------- */

function GraphPanel() {
  return (
    <section className="flex w-[811px] shrink-0 flex-col">
      <div className="flex h-[26px] shrink-0 items-center gap-1 border-t border-r border-l border-[#c8cad8]">
        <h2 className="pl-[5px] text-[15px] text-[#444]">图形</h2>
        <span className={DOTS} />
        <WindowButtons />
      </div>
      <div className="flex h-[35px] shrink-0 items-center pl-3 text-[15px] text-[#222]">
        <Grip />
        <span className="pr-[7px] pl-3">动画</span>
        <ToolButton label="首帧" width="w-[26px]">
          <Svg>
            <path d="M1 0h3v18H1z" fill="#8c8c8c" />
            <path d="M17 2v14L6 9z" fill="#c8c8c8" />
          </Svg>
        </ToolButton>
        <ToolButton label="播放">
          <Svg w={13} h={18}>
            <path d="M1 1l12 8-12 8z" fill="#d4a017" />
          </Svg>
        </ToolButton>
        <ToolButton label="停止" active>
          <Svg>
            <path d="M2 2h14v14H2z" fill="#cc9a0c" stroke="#555" />
          </Svg>
        </ToolButton>
        <ToolButton label="末帧">
          <Svg>
            <path d="M14 0h3v18h-3z" fill="#8c8c8c" />
            <path d="M1 2v14l11-7z" fill="#c8c8c8" />
          </Svg>
        </ToolButton>
        <Sep tight />
        <ToolButton label="分布时间" active>
          <Film color="#1dbb2e" />
        </ToolButton>
        <ToolButton label="结果集" width="w-7">
          <Film color="#1c7fd0" />
        </ToolButton>
        <Sep />
        <Select label="帧数" value="20 帧" className="h-7 w-[125px]" size="text-[15px]" />
        <Select label="时长" value="2 Sec (自动)" className="h-7 w-[125px]" size="text-[15px]" />
        <Sep tight />
        <ToolButton label="导出视频">
          <Svg>
            <path d="M1 2h16v10M1 2v12h7" stroke="#444" strokeWidth="2" />
            <path d="M2 5h14" stroke="#777" strokeDasharray="2 1" />
            <path d="M4 9c3-3 6-2 8 1" stroke="#e01515" strokeWidth="1.600" />
            <path d="M9 10h8v7H9z" fill="#d8ecff" stroke="#2a84d8" />
            <path d="M11 17v-3h4v3" stroke="#2a84d8" />
          </Svg>
        </ToolButton>
        <Sep tight />
        <ToolButton label="缩放时间">
          <Magnifier fill="#f2ead2">
            <path d="M6 4l6 4-6 4z" fill="#d9a520" />
          </Magnifier>
        </ToolButton>
        <ToolButton label="显示条带" width="w-7">
          <Svg>
            <g strokeWidth="5" strokeDasharray="3 .75">
              <path d="M0 3h18" stroke="#e01010" />
              <path d="M0 9h18" stroke="#10d820" />
              <path d="M0 15h18" stroke="#1010d8" />
            </g>
          </Svg>
        </ToolButton>
        <ToolButton label="相机">
          <Svg>
            <path d="M4 6l9-5 5 5-9 6z" fill="#a8a8a8" />
            <path d="M5 9l2 4-5 1M1 11v6" stroke="#a8a8a8" strokeWidth="2" />
          </Svg>
        </ToolButton>
        <Sep />
        <ToolButton label="关键帧">
          <GrayFilm />
        </ToolButton>
        <ToolButton label="保存关键帧">
          <GrayFilm down />
        </ToolButton>
        <Sep tight />
        <ToolButton label="周期">
          <Svg>
            <path d="M2 0v18M0 10h18M5 3v10M8 6v7M11 8v3M14 9v2" stroke="#b0b0b0" strokeWidth="1.300" />
          </Svg>
        </ToolButton>
        <input
          aria-label="周期数"
          defaultValue="3 Cycles"
          disabled
          className="ml-[2px] h-7 w-[72px] border border-[#cfcfdc] bg-[#eeeef0] pl-[3px] text-[15px] text-[#a4a4a4]"
        />
        <span className="ml-[3px]">
          <Svg w={10} h={22}>
            <path d="M2 1l3 3 3-3M2 5l3 3 3-3" stroke="#444" />
            <path d="M0 16h10l-5 4z" fill="#111" />
          </Svg>
        </span>
      </div>
      <div className="flex-1 bg-white">
        <svg viewBox="0 0 811 167" className="block w-full" role="img" aria-label="应力时间曲线">
          <g stroke="#9c9c9c" fill="none">
            <path d="M55.500 31.500h726v59M55.500 82.500h726M64.500 31v51" />
            {Array.from({ length: 10 }, (_, i) => (
              <path key={i} d={`M55.500 ${36.5 + i * 5}h9`} stroke="#b4b4b4" />
            ))}
            {Array.from({ length: 11 }, (_, i) => (
              <path key={i} d={`M${64.5 + Math.round(i * 71.7)} 82v9`} />
            ))}
            <path d="M64.500 134.500h717v17h-717z" />
          </g>
          <path d="M62 29h4v4h-4z" fill="#157a1c" />
          <path d="M62 64h4v4h-4z" fill="#1414c8" />
          <path d="M62 80h4v4h-4z" fill="#c81414" />
          <g fontFamily="Open Sans, sans-serif" fontWeight="700" fill="#000">
            <text x="425" y="123" fontSize="15" textAnchor="middle">
              [s]
            </text>
            <text x="43" y="52" fontSize="17" textAnchor="middle" transform="rotate(-90 43 52)">
              [MPa]
            </text>
          </g>
        </svg>
      </div>
    </section>
  );
}

/* ---------- tabular data ---------- */

const CELL = "border-r border-b border-[#c8c6be] bg-[#e9e8e4] px-1 text-left font-normal";
const HEAD = "border-r border-b border-[#8e8e8e] bg-[#f2f2f0] text-left font-normal";

function TablePanel() {
  return (
    <section className="ml-[5px] flex min-w-0 flex-1 flex-col">
      <div className="flex h-[27px] shrink-0 items-center gap-1 border-t border-l border-[#c8cad8]">
        <h2 className="pl-[6px] text-[15px] text-[#444]">表格数据</h2>
        <span className={DOTS} />
      </div>
      <div className="flex-1 bg-[#a0a0a0]">
        <table className="w-[396px] table-fixed border-separate border-spacing-0 text-[13px] text-black">
          <thead>
            <tr className="h-[23px]">
              <th className={clsx(HEAD, "w-[18px]")} aria-label="步" />
              <th className={clsx(HEAD, "w-[60px] pl-[5px]")}>时间 [s]</th>
              <th className={clsx(HEAD, "w-[106px] pl-1 text-[#c81414]")}>
                <Check label="最小 [MPa]" sharp className="gap-[7px]" />
              </th>
              <th className={clsx(HEAD, "w-[106px] pl-1 text-[#128a1a]")}>
                <Check label="最大 [MPa]" sharp className="gap-[7px]" />
              </th>
              <th className={clsx(HEAD, "pl-1 text-[#1414b4]")}>
                <Check label="平均 [MPa]" sharp className="gap-[7px]" />
              </th>
            </tr>
          </thead>
          <tbody>
            <tr className="h-[23px]">
              <th className={HEAD}>
                <span className="pl-1">1</span>
              </th>
              <td className={CELL}>1.</td>
              <td className={CELL}>1.0252e-002</td>
              <td className={CELL}>8.9933</td>
              <td className={CELL}>2.8566</td>
            </tr>
          </tbody>
        </table>
      </div>
    </section>
  );
}

/* ---------- page ---------- */

export default function App() {
  return (
    <div className="flex h-screen flex-col overflow-hidden bg-[#eeeef0] font-['Open_Sans','Noto_Sans_CJK_SC',sans-serif] whitespace-nowrap">
      <header className="flex h-8 shrink-0 items-stretch">
        <div className="flex w-[42px] items-center justify-end overflow-hidden border-t-4 border-[#2c5696] bg-[#d8e2f2] pr-[17px] text-[13px] text-[#3566b0]">
          <span>环境</span>
        </div>
        <h1 className="flex flex-1 items-center justify-center pt-[3px] pr-[92px] text-sm text-[#555]">
          A : 静态结构 - Mechanical [ANSYS Mechanical Enterprise]
        </h1>
        <button type="button" aria-label="最小化" className="flex w-[14px] items-center pt-[5px]">
          <span className="h-[3px] w-3 bg-black" />
        </button>
      </header>

      <div className="flex h-[33px] shrink-0 items-end text-sm text-[#1c1c1c]">
        <nav className="flex flex-1">
          <a href="#result" className="flex h-[33px] w-[42px] items-center justify-end border-t border-r border-[#cfcfd6] bg-[#fafafb] pt-px pr-4">
            结果
          </a>
          <a href="#display" className="flex items-center pt-[2px] pl-[18px]">
            显示
          </a>
          <a href="#select" className="flex items-center pt-[2px] pl-9">
            选择
          </a>
          <a href="#auto" className="flex items-center pt-[2px] pl-9">
            自动化
          </a>
        </nav>
        <input
          aria-label="快速启动"
          placeholder="快速启动"
          className="mb-1 h-[26px] w-[188px] border border-r-0 border-[#cfcfdc] bg-white pt-[2px] pl-1 text-sm placeholder:text-[#9a9a9a]"
        />
      </div>

      <Ribbon />

      <div className="flex min-h-0 flex-1">
        <LeftPanels />
        <main className="flex min-w-0 flex-1 flex-col">
          <ViewToolbar />
          <GraphicsView />
          <div className="mt-[5px] flex h-[229px] shrink-0">
            <GraphPanel />
            <TablePanel />
          </div>
        </main>
      </div>

      <footer className="flex h-[26px] shrink-0 items-center justify-end bg-[#007acc] pt-px text-[15px] text-white">
        <span className="pr-[22px]">消息窗格</span>
        <span className="pr-[26px]">无选择</span>
        <span className="flex items-center gap-[7px] pr-[27px]">
          <Svg w={10} h={8}>
            <path d="M5 0l5 6H0z" fill="#fff" />
          </Svg>
          度量标准（mm、kg、N、s、mV、mA）
        </span>
        <span className="pr-5">度</span>
      </footer>
      <div className="flex h-[6px] shrink-0 bg-[#26333a]">
        <div className="flex w-[257px] justify-end gap-5 overflow-hidden bg-[#f2f2f2] pr-7">
          <span className="mt-[3px] size-4 rounded-full bg-[#c8c8c8]" />
          <span className="mt-1 size-3 rounded-full border-2 border-[#333]" />
        </div>
        <span className="ml-[376px] w-[61px] bg-[#566167]" />
        <span className="ml-px w-[61px] bg-[#a86d34]" />
      </div>
    </div>
  );
}
